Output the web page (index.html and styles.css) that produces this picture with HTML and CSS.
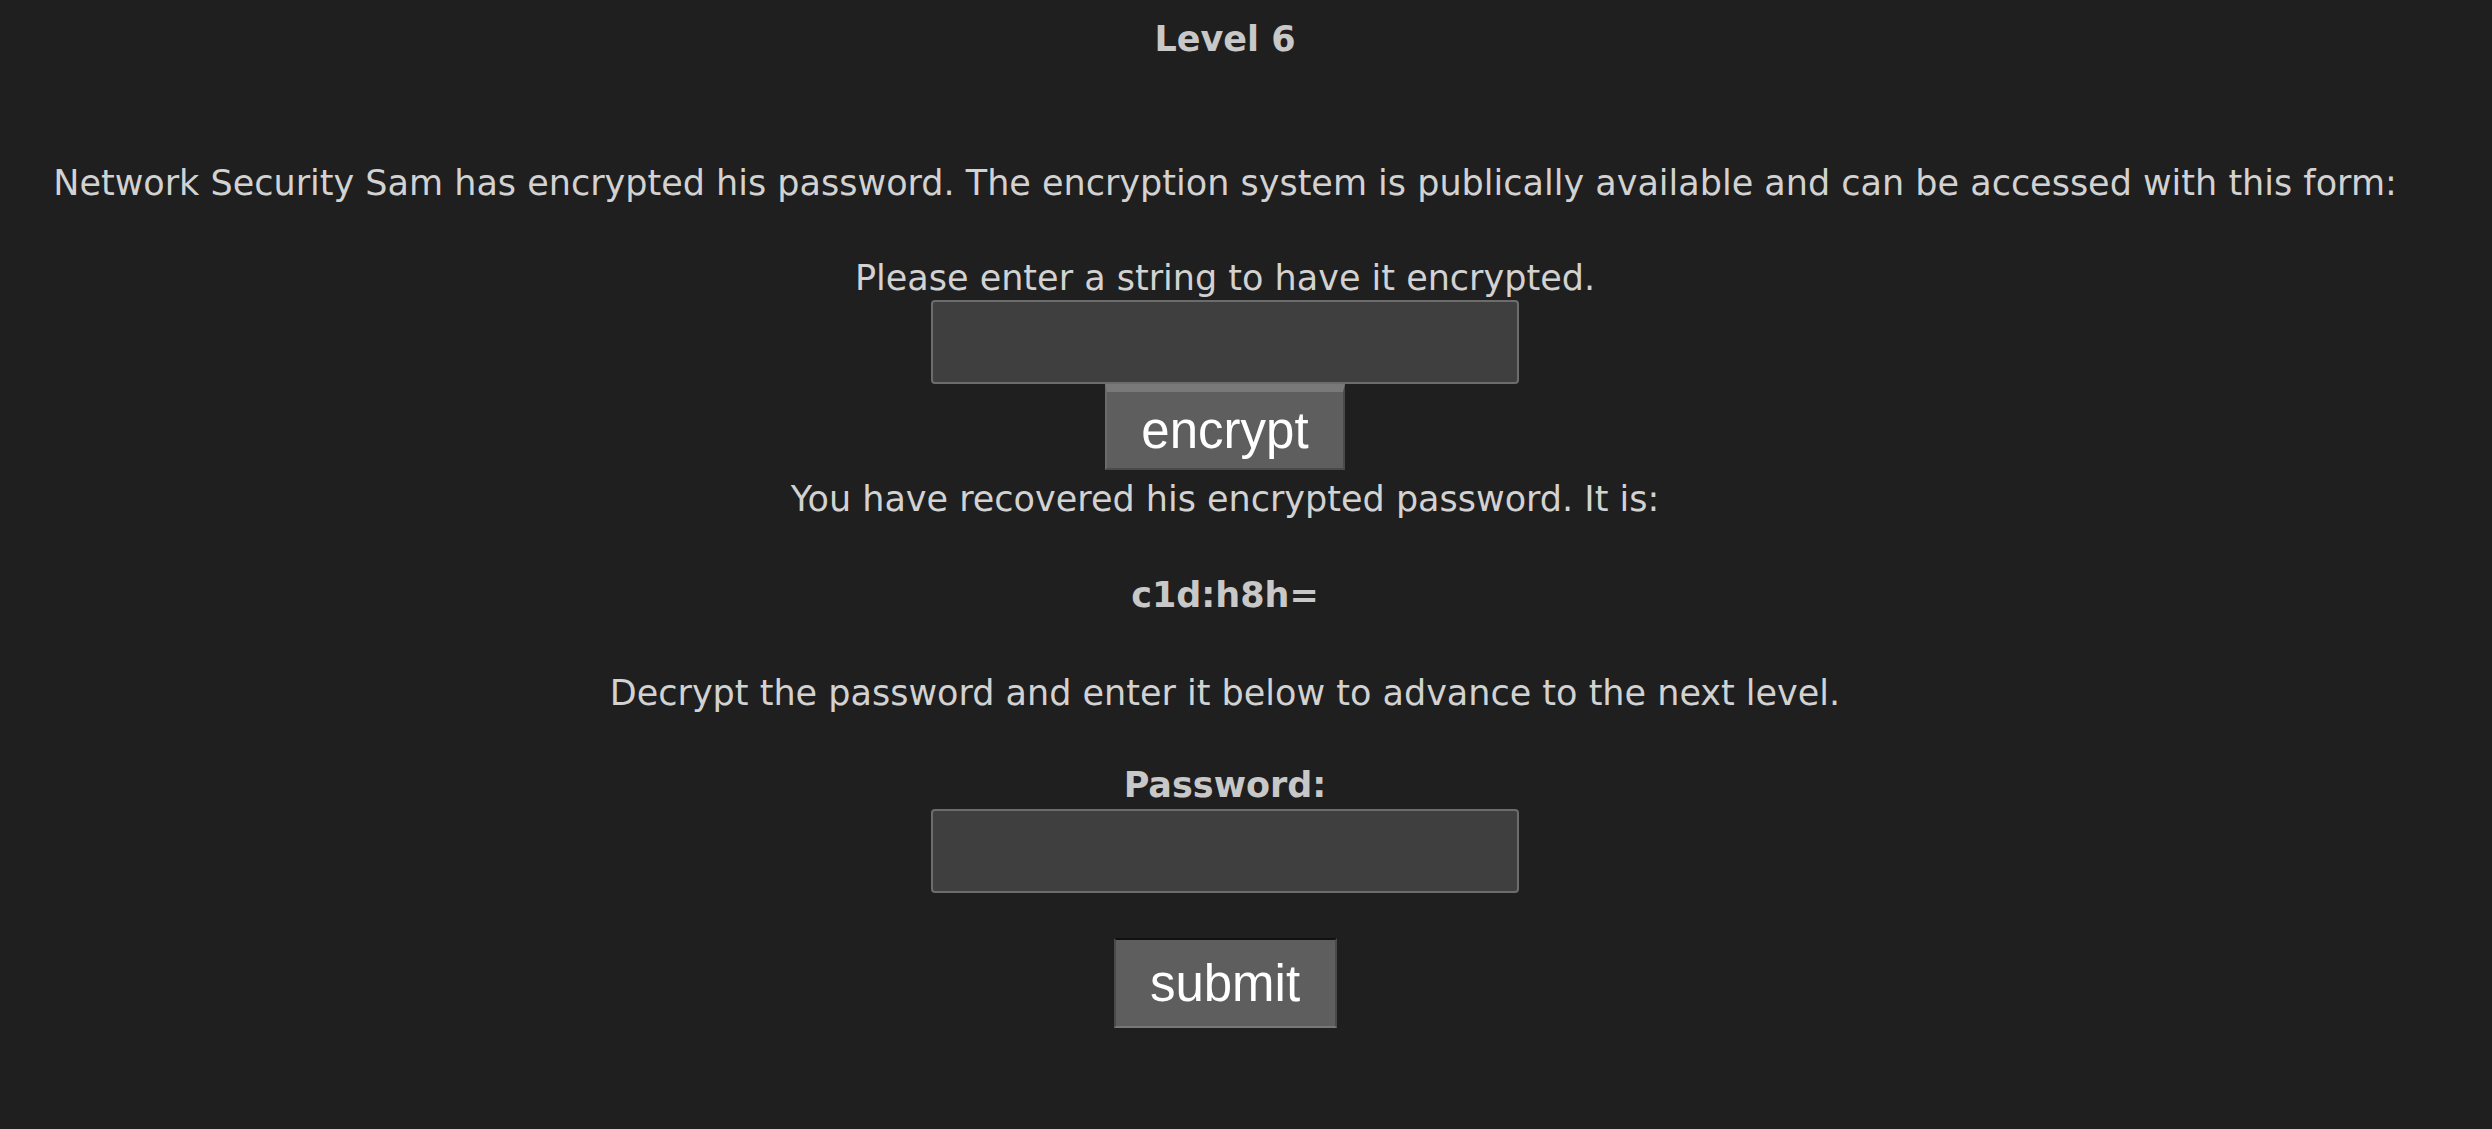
FILE: index.html
```html
<html lang="en">
<head>
    <meta charset="UTF-8">
    <title>Level 6</title>
    <link rel="stylesheet" href="styles.css">
</head>
<body>
    <div class="page">
        <div class="level-title">Level 6</div>
        <p class="intro">Network Security Sam has encrypted his password. The encryption system is publically available and can be accessed with this form:</p>
        <form class="encrypt-form" onsubmit="return false;">
            <div class="prompt">Please enter a string to have it encrypted.</div>
            <input type="text" class="text-box" name="user">
            <input type="submit" class="btn btn-encrypt" value="encrypt">
        </form>
        <div class="recovered">You have recovered his encrypted password. It is:</div>
        <div class="cipher">c1d:h8h=</div>
        <div class="hint">Decrypt the password and enter it below to advance to the next level.</div>
        <form class="pass-form" onsubmit="return false;">
            <div class="pass-label">Password:</div>
            <input type="password" class="text-box" name="pass">
            <input type="submit" class="btn btn-submit" value="submit">
        </form>
    </div>
</body>
</html>
```

FILE: styles.css
```css
body { margin: 0; background: #1f1f1f; color: #d2d2d2; font-family: "DejaVu Sans", Verdana, sans-serif; font-size: 35px; }
.page { display: flex; flex-direction: column; align-items: center; text-align: center; padding: 19px 42px 0 0; }
.level-title, .cipher, .pass-label { font-weight: bold; color: #c8c8c8; line-height: 40px; }
.level-title { margin: 0; }
.intro { margin: 104px 0 0; line-height: 40px; }
.encrypt-form, .pass-form { display: flex; flex-direction: column; align-items: center; margin: 0; }
.encrypt-form { margin-top: 55px; }
.prompt { line-height: 40px; }
.text-box { width: 588px; height: 84px; box-sizing: border-box; margin: 2px 0 0; background: #3f3f3f; border: 2px solid #6c6c6c; border-radius: 4px; color: #ddd; font-size: 35px; padding: 0 10px; }
.btn { font-family: "Liberation Sans", Arial, sans-serif; font-size: 51px; color: #fff; background: #5e5e5e; border: 2px solid #4a4a4a; box-sizing: border-box; margin: 0; padding: 0; cursor: pointer; }
.btn-encrypt { width: 240px; height: 86px; border-top: 8px solid #797979; border-left-color: #6a6a6a; }
.btn-submit { width: 223px; height: 90px; margin-top: 45px; border-top-color: #111; border-bottom-color: #777; }
.recovered { margin-top: 9px; line-height: 40px; }
.cipher { margin-top: 56px; }
.hint { margin-top: 58px; line-height: 40px; }
.pass-form { margin-top: 52px; }
.pass-form .text-box { margin-top: 4px; }
```
